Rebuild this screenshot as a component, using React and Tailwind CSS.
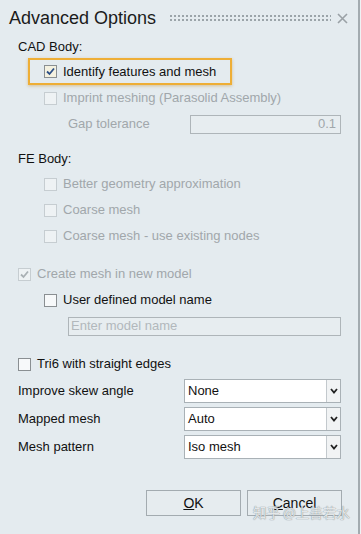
import React from "react";

const F = { fontFamily: '"Liberation Sans", Arial, sans-serif' };

function Box({ checked = false, disabled = false }) {
  return (
    <div
      className={
        "w-[13px] h-[13px] shrink-0 border flex items-center justify-center " +
        (disabled ? "border-[#c6cdd1] bg-[#eef2f4]" : checked ? "border-[#8a8f92] bg-[#f4f1e0]" : "border-[#8a8f92] bg-[#f7f9fa]")
      }
    >
      {checked && (
        <svg width="9" height="9" viewBox="0 0 9 9">
          <path
            d="M1 4.5 L3.5 7 L8 1.5"
            fill="none"
            stroke={disabled ? "#a9b0b4" : "#2c4f86"}
            strokeWidth="1.8"
          />
        </svg>
      )}
    </div>
  );
}

function Check({ label, checked, disabled, indent }) {
  return (
    <div className={"h-[26px] flex items-center " + indent}>
      <Box checked={checked} disabled={disabled} />
      <span className={"ml-[6px] text-[13px] " + (disabled ? "text-[#a1a7ab]" : "text-[#111]")}>{label}</span>
    </div>
  );
}

function Select({ label, value }) {
  return (
    <div className="h-[24px] flex items-center pl-[18px]">
      <span className="w-[166px] text-[13px] text-[#111]">{label}</span>
      <div className="w-[157px] h-[24px] flex border border-[#a9b1b6] bg-white">
        <span className="flex-1 pl-[3px] text-[13px] text-[#111] flex items-center">{value}</span>
        <div className="w-[14px] border-l border-[#c3c9cd] bg-[#f1f3f4] flex items-center justify-center">
          <svg width="8" height="6" viewBox="0 0 8 6">
            <path d="M1 1 L4 4.5 L7 1" fill="none" stroke="#222" strokeWidth="1.8" />
          </svg>
        </div>
      </div>
    </div>
  );
}

export default function App() {
  return (
    <div className="w-[361px] h-[534px] flex bg-[#e4ebef] relative" style={F}>
      <div className="w-[358px] h-full flex flex-col">
        {/* title */}
        <div className="h-[36px] flex items-center pl-[9px] pr-[10px]">
          <span className="text-[18px] text-[#1b1b1b]">Advanced Options</span>
          <div className="ml-[13px] flex-1 h-[8px] bg-[radial-gradient(circle,#9ba4a9_0.9px,transparent_1.1px)] bg-[length:4px_4px]" />
          <svg className="ml-[6px]" width="11" height="11" viewBox="0 0 11 11">
            <path d="M1 1 L10 10 M10 1 L1 10" stroke="#9aa1a6" strokeWidth="1.6" />
          </svg>
        </div>
        <div className="h-[22px] flex items-center pl-[18px] text-[13px] text-[#111]">CAD Body:</div>
        <div className="h-[27px] flex items-center">
          <div className="ml-[28px] w-[204px] h-[27px] border-2 border-[#eeae36] shadow-[0_1px_3px_rgba(200,140,40,0.45)] flex items-center pl-[14px]">
            <Box checked />
            <span className="ml-[6px] text-[13px] text-[#111]">Identify features and mesh</span>
          </div>
        </div>
        <Check label="Imprint meshing (Parasolid Assembly)" disabled indent="pl-[44px]" />
        <div className="h-[26px] flex items-center">
          <span className="pl-[68px] w-[190px] text-[13px] text-[#a1a7ab]">Gap tolerance</span>
          <div className="w-[151px] h-[19px] border border-[#aeb5b9] bg-[#e7edf0] flex items-center justify-end pr-[4px] text-[13px] text-[#a1a7ab]">0.1</div>
        </div>
        <div className="h-[10px]" />
        <div className="h-[24px] flex items-center pl-[18px] text-[13px] text-[#111]">FE Body:</div>
        <Check label="Better geometry approximation" disabled indent="pl-[44px]" />
        <Check label="Coarse mesh" disabled indent="pl-[44px]" />
        <Check label="Coarse mesh - use existing nodes" disabled indent="pl-[44px]" />
        <div className="h-[12px]" />
        <Check label="Create mesh in new model" checked disabled indent="pl-[18px]" />
        <Check label="User defined model name" indent="pl-[44px]" />
        <div className="h-[26px] flex items-center pl-[68px]">
          <div className="w-[273px] h-[19px] border border-[#aeb5b9] bg-[#e7edf0] flex items-center pl-[2px] text-[13px] text-[#b2b8bc]">Enter model name</div>
        </div>
        <div className="h-[12px]" />
        <Check label="Tri6 with straight edges" indent="pl-[18px]" />
        <div className="h-[2px]" />
        <div className="flex flex-col gap-[4px]">
          <Select label="Improve skew angle" value="None" />
          <Select label="Mapped mesh" value="Auto" />
          <Select label="Mesh pattern" value="Iso mesh" />
        </div>
        <div className="h-[31px]" />
        <div className="flex pl-[146px] gap-[6px]">
          <button className="w-[95px] h-[26px] border border-[#a3abb0] bg-[#e6ecef] text-[14px] text-[#111]">
            <span className="underline">O</span>K
          </button>
          <button className="w-[95px] h-[26px] border border-[#a3abb0] bg-[#e6ecef] text-[14px] text-[#111]">
            <span className="underline">C</span>ancel
          </button>
        </div>
      </div>
      <div className="w-[2px] h-full bg-[#a3abb0]" />
      <div className="w-[1px] h-full bg-[#eef2f4]" />
      <div
        className="absolute left-[253px] top-[503px] text-[13.5px] leading-[18px] whitespace-nowrap text-[#f3f6f7]/85 [text-shadow:0_0_1px_#8e979c,0_0_1px_#8e979c]"
        style={{ fontFamily: '"Noto Sans CJK SC", sans-serif' }}
      >
        知乎 @上善若水
      </div>
    </div>
  );
}
